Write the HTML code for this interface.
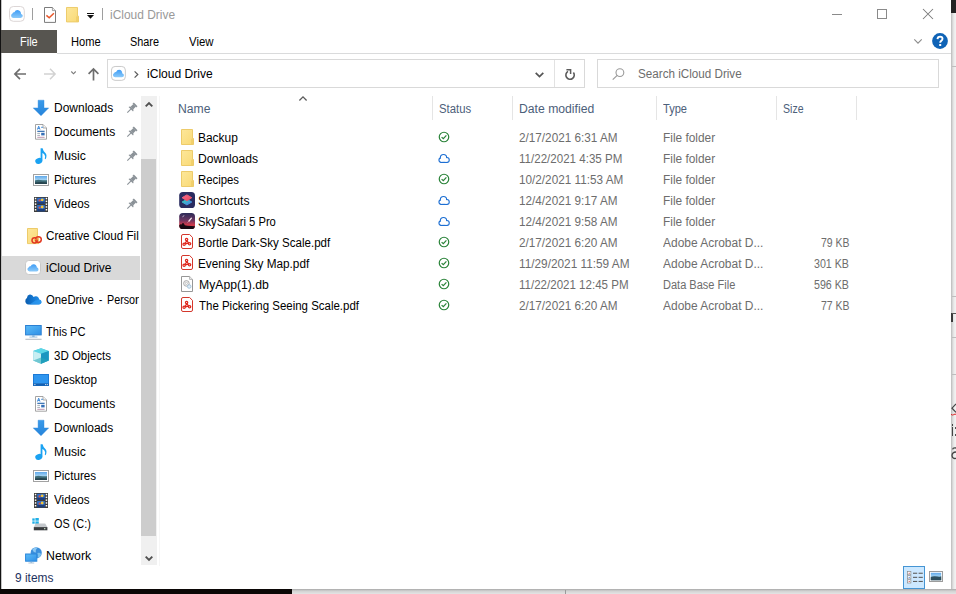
<!DOCTYPE html>
<html>
<head>
<meta charset="utf-8">
<title>iCloud Drive</title>
<style>
html,body{margin:0;padding:0;}
body{width:956px;height:594px;overflow:hidden;background:#fff;font-family:"Liberation Sans",sans-serif;font-size:12px;color:#000;position:relative;}
.a{position:absolute;}
.t{position:absolute;transform-origin:0 0;white-space:nowrap;line-height:16px;height:16px;font-size:12px;}
svg{position:absolute;overflow:visible;}
.sep{position:absolute;top:96px;width:1px;height:24px;background:#e5e5e5;}
</style>
</head>
<body>
<!-- window chrome / backgrounds -->
<div class="a" style="left:951px;top:0;width:5px;height:594px;background:linear-gradient(90deg,#b9b9b9 0,#d6d6d6 30%,#ebebeb 60%,#f3f3f3 100%);"></div>
<div class="a" style="left:951px;top:0;width:5px;height:13px;background:#222;"></div>
<div class="a" style="left:0;top:589px;width:956px;height:5px;background:linear-gradient(180deg,#a8a8a8 0,#d2d2d2 40%,#e4e4e4 100%);"></div>
<div class="a" style="left:0;top:589px;width:292px;height:5px;background:#0b0706;"></div>
<div class="a" style="left:0;top:0;width:1px;height:589px;background:#121212;"></div>
<div class="a" style="left:1px;top:0;width:1px;height:589px;background:#c4c4c4;"></div>

<!-- ribbon -->
<div class="a" style="left:1px;top:30px;width:56px;height:23px;background:#575550;"></div>
<div class="a" style="left:57px;top:53px;width:894px;height:1px;background:#dadbdc;"></div>

<!-- address + search -->
<div class="a" style="left:107px;top:59px;width:478px;height:29px;border:1px solid #d9d9d9;box-sizing:border-box;"></div>
<div class="a" style="left:554px;top:60px;width:1px;height:27px;background:#e2e2e2;"></div>
<div class="a" style="left:597px;top:59px;width:342px;height:29px;border:1px solid #d9d9d9;box-sizing:border-box;"></div>

<!-- sidebar selection + scrollbar -->
<div class="a" style="left:2px;top:256px;width:138px;height:24px;background:#d9d9d9;"></div>
<div class="a" style="left:141px;top:96px;width:16px;height:469px;background:#f0f0f0;"></div>
<div class="a" style="left:141px;top:159px;width:15px;height:377px;background:#cdcdcd;"></div>
<div class="a" style="left:159px;top:96px;width:1px;height:470px;background:#f6f6f6;"></div>

<!-- header separators -->
<div class="sep" style="left:432px;"></div>
<div class="sep" style="left:512px;"></div>
<div class="sep" style="left:656px;"></div>
<div class="sep" style="left:776px;"></div>
<div class="sep" style="left:856px;"></div>

<!-- fragments of window behind, right strip -->
<div class="a" style="left:952px;top:66px;width:4px;height:1px;background:#bdbdbd;"></div>
<div class="a" style="left:952px;top:296px;width:4px;height:1px;background:#bdbdbd;"></div>
<div class="a" style="left:952px;top:337px;width:4px;height:1px;background:#bdbdbd;"></div>
<div class="a" style="left:952px;top:374px;width:4px;height:1px;background:#bdbdbd;"></div>
<div class="a" style="left:951px;top:313px;width:2px;height:9px;background:#3a3a3a;"></div>
<div class="a" style="left:952px;top:313px;width:4px;height:1px;background:#555;"></div>
<svg style="left:951px;top:404px;" width="5" height="12" viewBox="0 0 5 12"><path d="M5 0L1 4.2L5 8.4" fill="none" stroke="#444" stroke-width="1.2"/><path d="M0 10.4Q1.5 11.6 2.8 10.6T5 10.4" fill="none" stroke="#d22" stroke-width="1"/></svg>
<div class="a" style="left:952px;top:424px;width:1px;height:2px;background:#444;"></div>
<div class="a" style="left:952px;top:427px;width:1px;height:9px;background:#444;"></div>
<div class="a" style="left:955px;top:427px;width:1px;height:2px;background:#555;"></div>
<div class="a" style="left:955px;top:434px;width:1px;height:2px;background:#555;"></div>
<svg style="left:951px;top:447px;" width="5" height="13" viewBox="0 0 5 13"><path d="M5 1Q2 0.4 1.6 2.4M5 5Q1 5 1 8.6Q1.4 12 5 11.4" fill="none" stroke="#444" stroke-width="1.3"/></svg>
<!-- bottom strip detail -->
<div class="a" style="left:565px;top:590px;width:1px;height:4px;background:#9a9a9a;"></div>
<!-- icons -->
<svg width="0" height="0" style="left:0;top:0;">
<defs>
<linearGradient id="gFold" x1="0" y1="0" x2="1" y2="1"><stop offset="0" stop-color="#fde79a"/><stop offset="1" stop-color="#f9d975"/></linearGradient>
<linearGradient id="gCloud" x1="0" y1="0" x2="0" y2="1"><stop offset="0" stop-color="#3d9cf6"/><stop offset="1" stop-color="#8ccaf9"/></linearGradient>
<linearGradient id="gOne" x1="0" y1="0" x2="1" y2="0"><stop offset="0" stop-color="#0b5cad"/><stop offset="0.5" stop-color="#1479d4"/><stop offset="1" stop-color="#2a94ea"/></linearGradient>
<linearGradient id="gArrow" x1="0" y1="0" x2="0" y2="1"><stop offset="0" stop-color="#3b9bea"/><stop offset="1" stop-color="#2583da"/></linearGradient>
<linearGradient id="gScreen" x1="0" y1="0" x2="1" y2="1"><stop offset="0" stop-color="#5cbcf8"/><stop offset="1" stop-color="#2f8fe6"/></linearGradient>
<linearGradient id="gSky" x1="0" y1="0" x2="0" y2="1"><stop offset="0" stop-color="#2b2b58"/><stop offset="0.45" stop-color="#6a3560"/><stop offset="0.75" stop-color="#d23c4c"/><stop offset="1" stop-color="#c03040"/></linearGradient>
<linearGradient id="gPink" x1="0" y1="0" x2="1" y2="1"><stop offset="0" stop-color="#f86a8c"/><stop offset="1" stop-color="#e8485a"/></linearGradient>
<linearGradient id="gTeal" x1="0" y1="0" x2="1" y2="1"><stop offset="0" stop-color="#36d6b8"/><stop offset="1" stop-color="#4a78ec"/></linearGradient>
<linearGradient id="gPic" x1="0" y1="0" x2="0" y2="1"><stop offset="0" stop-color="#5fa8ea"/><stop offset="0.45" stop-color="#9fd0f2"/><stop offset="0.6" stop-color="#4d7f8a"/><stop offset="1" stop-color="#2d5560"/></linearGradient>

<!-- folder 13x16 -->

<!-- pdf 12x15 -->

<!-- db file 12x16 -->

<!-- status: check 12x12 -->
<!-- status: cloud 12x9 -->
</defs>
</svg>

<!-- file list icons -->
<svg style="left:181px;top:129px;" width="13" height="16" viewBox="0 0 13 16" preserveAspectRatio="none"><path d="M0.5 0.5H11.5V9.5H12.5V15.5H0.5Z" fill="url(#gFold)" stroke="#edcb6a" stroke-width="1"/>
<path d="M11 9.8V15" stroke="#e9c45c" stroke-width="1" fill="none"/></svg>
<svg style="left:181px;top:150px;" width="13" height="16" viewBox="0 0 13 16" preserveAspectRatio="none"><path d="M0.5 0.5H11.5V9.5H12.5V15.5H0.5Z" fill="url(#gFold)" stroke="#edcb6a" stroke-width="1"/>
<path d="M11 9.8V15" stroke="#e9c45c" stroke-width="1" fill="none"/></svg>
<svg style="left:181px;top:171px;" width="13" height="16" viewBox="0 0 13 16" preserveAspectRatio="none"><path d="M0.5 0.5H11.5V9.5H12.5V15.5H0.5Z" fill="url(#gFold)" stroke="#edcb6a" stroke-width="1"/>
<path d="M11 9.8V15" stroke="#e9c45c" stroke-width="1" fill="none"/></svg>

<!-- Shortcuts -->
<svg style="left:179px;top:192px;" width="16" height="16" viewBox="0 0 16 16">
<rect x="0.2" y="0" width="15.8" height="16" rx="3.6" fill="#2a2c60"/>
<path d="M7.9 7.4L12.8 10L7.9 12.9L3.1 10Z" fill="url(#gTeal)" stroke="url(#gTeal)" stroke-width="1" stroke-linejoin="round"/>
<path d="M7.9 2.9L12.8 5.7L7.9 8.7L3.1 5.7Z" fill="url(#gPink)" stroke="url(#gPink)" stroke-width="1" stroke-linejoin="round"/>
</svg>

<!-- SkySafari -->
<svg style="left:179px;top:213px;" width="16" height="16" viewBox="0 0 16 16">
<defs><clipPath id="ssc"><rect x="0.2" y="0" width="15.8" height="16" rx="3.6"/></clipPath></defs>
<g clip-path="url(#ssc)">
<rect x="0" y="0" width="16" height="16" fill="url(#gSky)"/>
<path d="M0 12.6Q1.4 10.6 2.6 11.6Q3.4 9.2 4.6 10.2Q5.4 11 5.8 12.2L8.4 12.8L16 13.2V16H0Z" fill="#150a12"/>
<path d="M4.8 2.6L3.8 3.9" stroke="#d8cfe4" stroke-width="0.9" stroke-linecap="round" opacity="0.9"/>
<path d="M12.4 5.2L10 8" stroke="#f6e8ee" stroke-width="1.3" stroke-linecap="round"/>
<path d="M10 8L8.8 9.4" stroke="#e8a0b0" stroke-width="0.9" stroke-linecap="round" opacity="0.7"/>
</g>
</svg>

<svg style="left:181px;top:234px;" width="12" height="15" viewBox="0 0 12 15" preserveAspectRatio="none"><path d="M2 0.5H8.6L11.5 3.4V13Q11.5 14.5 10 14.5H2Q0.5 14.5 0.5 13V2Q0.5 0.5 2 0.5Z" fill="#fff" stroke="#d4372c" stroke-width="1"/>
<g fill="none" stroke="#e0281e" stroke-width="1.25">
<circle cx="5.6" cy="5.4" r="1.15"/>
<circle cx="3.1" cy="10.3" r="1.15"/>
<circle cx="8.6" cy="9.7" r="1.15"/>
<path d="M5.5 6.5Q5.2 8.6 3.7 9.5M5.9 6.5Q6.6 8.2 7.8 9M4.2 10Q6 9.2 7.5 9.5"/>
</g></svg>
<svg style="left:181px;top:255px;" width="12" height="15" viewBox="0 0 12 15" preserveAspectRatio="none"><path d="M2 0.5H8.6L11.5 3.4V13Q11.5 14.5 10 14.5H2Q0.5 14.5 0.5 13V2Q0.5 0.5 2 0.5Z" fill="#fff" stroke="#d4372c" stroke-width="1"/>
<g fill="none" stroke="#e0281e" stroke-width="1.25">
<circle cx="5.6" cy="5.4" r="1.15"/>
<circle cx="3.1" cy="10.3" r="1.15"/>
<circle cx="8.6" cy="9.7" r="1.15"/>
<path d="M5.5 6.5Q5.2 8.6 3.7 9.5M5.9 6.5Q6.6 8.2 7.8 9M4.2 10Q6 9.2 7.5 9.5"/>
</g></svg>
<svg style="left:181px;top:276px;" width="12" height="16" viewBox="0 0 12 16" preserveAspectRatio="none"><path d="M0.5 0.5H8.6L11.5 3.4V15.5H0.5Z" fill="#fff" stroke="#979797" stroke-width="1"/>
<path d="M8.6 0.5V3.4H11.5" fill="#f4f4f4" stroke="#a4a4a4" stroke-width="0.8"/>
<circle cx="5.4" cy="7.4" r="2.8" fill="#f6f6f6" stroke="#a2a2a2" stroke-width="0.9"/>
<circle cx="5.4" cy="7.4" r="1.1" fill="#fff" stroke="#b0b0b0" stroke-width="0.7"/>
<circle cx="8.2" cy="10.5" r="1.8" fill="#dcebf7" stroke="#9bbcd6" stroke-width="0.8"/></svg>
<svg style="left:181px;top:297px;" width="12" height="15" viewBox="0 0 12 15" preserveAspectRatio="none"><path d="M2 0.5H8.6L11.5 3.4V13Q11.5 14.5 10 14.5H2Q0.5 14.5 0.5 13V2Q0.5 0.5 2 0.5Z" fill="#fff" stroke="#d4372c" stroke-width="1"/>
<g fill="none" stroke="#e0281e" stroke-width="1.25">
<circle cx="5.6" cy="5.4" r="1.15"/>
<circle cx="3.1" cy="10.3" r="1.15"/>
<circle cx="8.6" cy="9.7" r="1.15"/>
<path d="M5.5 6.5Q5.2 8.6 3.7 9.5M5.9 6.5Q6.6 8.2 7.8 9M4.2 10Q6 9.2 7.5 9.5"/>
</g></svg>

<!-- status icons -->
<svg style="left:437.7px;top:131px;" width="12" height="12" viewBox="0 0 12 12" preserveAspectRatio="none"><circle cx="6" cy="6" r="4.75" fill="#fff" stroke="#2a8339" stroke-width="1.2"/>
<path d="M3.6 6.1L5.3 7.7L8.4 4.4" fill="none" stroke="#2a8339" stroke-width="1.2"/></svg>
<svg style="left:438px;top:154px;" width="12" height="9" viewBox="0 0 12 9" preserveAspectRatio="none"><g fill="#1d6fd3" stroke="#1d6fd3" stroke-width="2.2" stroke-linejoin="round"><circle cx="5.5" cy="3.7" r="2.6"/><circle cx="8.8" cy="5.9" r="1.9"/><circle cx="3.2" cy="6.1" r="1.7"/><rect x="3.2" y="5" width="5.6" height="2.8"/></g>
<g fill="#fff"><circle cx="5.5" cy="3.7" r="2.6"/><circle cx="8.8" cy="5.9" r="1.9"/><circle cx="3.2" cy="6.1" r="1.7"/><rect x="3.2" y="5" width="5.6" height="2.8"/></g></svg>
<svg style="left:437.7px;top:173px;" width="12" height="12" viewBox="0 0 12 12" preserveAspectRatio="none"><circle cx="6" cy="6" r="4.75" fill="#fff" stroke="#2a8339" stroke-width="1.2"/>
<path d="M3.6 6.1L5.3 7.7L8.4 4.4" fill="none" stroke="#2a8339" stroke-width="1.2"/></svg>
<svg style="left:438px;top:196px;" width="12" height="9" viewBox="0 0 12 9" preserveAspectRatio="none"><g fill="#1d6fd3" stroke="#1d6fd3" stroke-width="2.2" stroke-linejoin="round"><circle cx="5.5" cy="3.7" r="2.6"/><circle cx="8.8" cy="5.9" r="1.9"/><circle cx="3.2" cy="6.1" r="1.7"/><rect x="3.2" y="5" width="5.6" height="2.8"/></g>
<g fill="#fff"><circle cx="5.5" cy="3.7" r="2.6"/><circle cx="8.8" cy="5.9" r="1.9"/><circle cx="3.2" cy="6.1" r="1.7"/><rect x="3.2" y="5" width="5.6" height="2.8"/></g></svg>
<svg style="left:438px;top:217px;" width="12" height="9" viewBox="0 0 12 9" preserveAspectRatio="none"><g fill="#1d6fd3" stroke="#1d6fd3" stroke-width="2.2" stroke-linejoin="round"><circle cx="5.5" cy="3.7" r="2.6"/><circle cx="8.8" cy="5.9" r="1.9"/><circle cx="3.2" cy="6.1" r="1.7"/><rect x="3.2" y="5" width="5.6" height="2.8"/></g>
<g fill="#fff"><circle cx="5.5" cy="3.7" r="2.6"/><circle cx="8.8" cy="5.9" r="1.9"/><circle cx="3.2" cy="6.1" r="1.7"/><rect x="3.2" y="5" width="5.6" height="2.8"/></g></svg>
<svg style="left:437.7px;top:236px;" width="12" height="12" viewBox="0 0 12 12" preserveAspectRatio="none"><circle cx="6" cy="6" r="4.75" fill="#fff" stroke="#2a8339" stroke-width="1.2"/>
<path d="M3.6 6.1L5.3 7.7L8.4 4.4" fill="none" stroke="#2a8339" stroke-width="1.2"/></svg>
<svg style="left:437.7px;top:257px;" width="12" height="12" viewBox="0 0 12 12" preserveAspectRatio="none"><circle cx="6" cy="6" r="4.75" fill="#fff" stroke="#2a8339" stroke-width="1.2"/>
<path d="M3.6 6.1L5.3 7.7L8.4 4.4" fill="none" stroke="#2a8339" stroke-width="1.2"/></svg>
<svg style="left:437.7px;top:278px;" width="12" height="12" viewBox="0 0 12 12" preserveAspectRatio="none"><circle cx="6" cy="6" r="4.75" fill="#fff" stroke="#2a8339" stroke-width="1.2"/>
<path d="M3.6 6.1L5.3 7.7L8.4 4.4" fill="none" stroke="#2a8339" stroke-width="1.2"/></svg>
<svg style="left:437.7px;top:299px;" width="12" height="12" viewBox="0 0 12 12" preserveAspectRatio="none"><circle cx="6" cy="6" r="4.75" fill="#fff" stroke="#2a8339" stroke-width="1.2"/>
<path d="M3.6 6.1L5.3 7.7L8.4 4.4" fill="none" stroke="#2a8339" stroke-width="1.2"/></svg>

<!-- sidebar symbols -->
<svg width="0" height="0" style="left:0;top:0;">
<defs>
</defs>
</svg>

<svg style="left:33px;top:100px;" width="16" height="16" viewBox="0 0 16 16" preserveAspectRatio="none"><path d="M5.1 0.2H11V7.9H15.7L8 15.8L0.2 7.9H5.1Z" fill="url(#gArrow)" stroke="#2a86dc" stroke-width="0.4"/></svg>
<svg style="left:35px;top:124px;" width="12" height="16" viewBox="0 0 12 16" preserveAspectRatio="none"><path d="M0.5 0.5H8L11.5 4V15.2H0.5Z" fill="#fff" stroke="#9a9a9a" stroke-width="0.9"/>
<path d="M8 0.5V4H11.5" fill="#f4f4f4" stroke="#9a9a9a" stroke-width="0.8"/>
<path d="M2.4 5.6L3.7 2.2L5 5.6M2.9 4.4H4.5" stroke="#2b7fd6" stroke-width="0.9" fill="none"/>
<path d="M6 3.3H8" stroke="#4a93dc" stroke-width="0.9"/>
<path d="M2.3 7.3H9.6" stroke="#1f5fa8" stroke-width="1.1"/>
<path d="M2.3 9.4H5M2.3 11.4H5" stroke="#9aa4b0" stroke-width="0.9"/>
<rect x="6.2" y="8.8" width="3.4" height="2.6" fill="#3570b8"/>
<path d="M2.3 13.3H9.6" stroke="#b58aa8" stroke-width="0.9"/></svg>
<svg style="left:35px;top:148px;" width="12" height="16" viewBox="0 0 12 16" preserveAspectRatio="none"><ellipse cx="3.8" cy="12.9" rx="3.6" ry="2.9" fill="#1aa2f2" transform="rotate(-18 3.8 12.9)"/>
<path d="M5.6 0.3L7.6 0.3Q8 3 10.6 5.2Q12.4 7.2 10.6 11.2L9.8 10.8Q10.8 7.8 9.2 6.2Q8.2 5.2 7.4 5V12.6H5.6Z" fill="#1aa2f2"/></svg>
<svg style="left:33.2px;top:174.2px;" width="16" height="12" viewBox="0 0 16 12" preserveAspectRatio="none"><rect x="0.5" y="0.5" width="15" height="11" fill="#fff" stroke="#a2a2a2" stroke-width="1"/>
<rect x="2" y="2" width="12" height="8" fill="url(#gPic)"/>
<path d="M2 7.2Q5 5 8 6.2T14 6.4V10H2Z" fill="#3c6874" opacity="0.85"/>
<path d="M2 8.6Q7 7.4 14 8.4V10H2Z" fill="#27454f"/></svg>
<svg style="left:34.2px;top:196.8px;" width="14" height="15" viewBox="0 0 14 15" preserveAspectRatio="none"><rect x="0" y="0" width="14" height="15" fill="#3b3b3b"/>
<g fill="#fff"><rect x="0.8" y="0.8" width="1.5" height="1.5"/><rect x="0.8" y="3.6" width="1.5" height="1.5"/><rect x="0.8" y="6.4" width="1.5" height="1.5"/><rect x="0.8" y="9.2" width="1.5" height="1.5"/><rect x="0.8" y="12" width="1.5" height="1.5"/>
<rect x="11.7" y="0.8" width="1.5" height="1.5"/><rect x="11.7" y="3.6" width="1.5" height="1.5"/><rect x="11.7" y="6.4" width="1.5" height="1.5"/><rect x="11.7" y="9.2" width="1.5" height="1.5"/><rect x="11.7" y="12" width="1.5" height="1.5"/></g>
<rect x="3.2" y="0.8" width="7.6" height="6.2" fill="#2d6fce"/>
<rect x="3.2" y="8" width="7.6" height="6.2" fill="#2d6fce"/>
<rect x="3.2" y="4.6" width="7.6" height="2.4" fill="#1d3e7a"/>
<rect x="3.2" y="11.8" width="7.6" height="2.4" fill="#1d3e7a"/>
<circle cx="8.2" cy="2.8" r="1.4" fill="#f4c83a"/><circle cx="5.6" cy="3.4" r="1.1" fill="#d8503a"/>
<circle cx="8.2" cy="10" r="1.4" fill="#f4c83a"/><circle cx="5.6" cy="10.6" r="1.1" fill="#d8503a"/></svg>

<svg style="left:123.9px;top:100.5px;" width="15" height="15" viewBox="-2 -2 15 15" preserveAspectRatio="none"><g transform="rotate(45 5.5 5.5)" fill="#8a9197">
<rect x="2.9" y="-0.4" width="5.2" height="1.9"/>
<rect x="3.7" y="1.4" width="3.6" height="3.6"/>
<path d="M2.3 6.5Q2.5 4.8 4 4.8H7Q8.5 4.8 8.7 6.5Z"/>
<rect x="4.95" y="6.5" width="1.1" height="4.9"/>
</g></svg>
<svg style="left:123.9px;top:124.5px;" width="15" height="15" viewBox="-2 -2 15 15" preserveAspectRatio="none"><g transform="rotate(45 5.5 5.5)" fill="#8a9197">
<rect x="2.9" y="-0.4" width="5.2" height="1.9"/>
<rect x="3.7" y="1.4" width="3.6" height="3.6"/>
<path d="M2.3 6.5Q2.5 4.8 4 4.8H7Q8.5 4.8 8.7 6.5Z"/>
<rect x="4.95" y="6.5" width="1.1" height="4.9"/>
</g></svg>
<svg style="left:123.9px;top:148.5px;" width="15" height="15" viewBox="-2 -2 15 15" preserveAspectRatio="none"><g transform="rotate(45 5.5 5.5)" fill="#8a9197">
<rect x="2.9" y="-0.4" width="5.2" height="1.9"/>
<rect x="3.7" y="1.4" width="3.6" height="3.6"/>
<path d="M2.3 6.5Q2.5 4.8 4 4.8H7Q8.5 4.8 8.7 6.5Z"/>
<rect x="4.95" y="6.5" width="1.1" height="4.9"/>
</g></svg>
<svg style="left:123.9px;top:172.5px;" width="15" height="15" viewBox="-2 -2 15 15" preserveAspectRatio="none"><g transform="rotate(45 5.5 5.5)" fill="#8a9197">
<rect x="2.9" y="-0.4" width="5.2" height="1.9"/>
<rect x="3.7" y="1.4" width="3.6" height="3.6"/>
<path d="M2.3 6.5Q2.5 4.8 4 4.8H7Q8.5 4.8 8.7 6.5Z"/>
<rect x="4.95" y="6.5" width="1.1" height="4.9"/>
</g></svg>
<svg style="left:123.9px;top:196.5px;" width="15" height="15" viewBox="-2 -2 15 15" preserveAspectRatio="none"><g transform="rotate(45 5.5 5.5)" fill="#8a9197">
<rect x="2.9" y="-0.4" width="5.2" height="1.9"/>
<rect x="3.7" y="1.4" width="3.6" height="3.6"/>
<path d="M2.3 6.5Q2.5 4.8 4 4.8H7Q8.5 4.8 8.7 6.5Z"/>
<rect x="4.95" y="6.5" width="1.1" height="4.9"/>
</g></svg>

<!-- This PC children -->
<svg style="left:35px;top:396px;" width="12" height="16" viewBox="0 0 12 16" preserveAspectRatio="none"><path d="M0.5 0.5H8L11.5 4V15.2H0.5Z" fill="#fff" stroke="#9a9a9a" stroke-width="0.9"/>
<path d="M8 0.5V4H11.5" fill="#f4f4f4" stroke="#9a9a9a" stroke-width="0.8"/>
<path d="M2.4 5.6L3.7 2.2L5 5.6M2.9 4.4H4.5" stroke="#2b7fd6" stroke-width="0.9" fill="none"/>
<path d="M6 3.3H8" stroke="#4a93dc" stroke-width="0.9"/>
<path d="M2.3 7.3H9.6" stroke="#1f5fa8" stroke-width="1.1"/>
<path d="M2.3 9.4H5M2.3 11.4H5" stroke="#9aa4b0" stroke-width="0.9"/>
<rect x="6.2" y="8.8" width="3.4" height="2.6" fill="#3570b8"/>
<path d="M2.3 13.3H9.6" stroke="#b58aa8" stroke-width="0.9"/></svg>
<svg style="left:33px;top:420px;" width="16" height="16" viewBox="0 0 16 16" preserveAspectRatio="none"><path d="M5.1 0.2H11V7.9H15.7L8 15.8L0.2 7.9H5.1Z" fill="url(#gArrow)" stroke="#2a86dc" stroke-width="0.4"/></svg>
<svg style="left:35px;top:444px;" width="12" height="16" viewBox="0 0 12 16" preserveAspectRatio="none"><ellipse cx="3.8" cy="12.9" rx="3.6" ry="2.9" fill="#1aa2f2" transform="rotate(-18 3.8 12.9)"/>
<path d="M5.6 0.3L7.6 0.3Q8 3 10.6 5.2Q12.4 7.2 10.6 11.2L9.8 10.8Q10.8 7.8 9.2 6.2Q8.2 5.2 7.4 5V12.6H5.6Z" fill="#1aa2f2"/></svg>
<svg style="left:33.2px;top:470.2px;" width="16" height="12" viewBox="0 0 16 12" preserveAspectRatio="none"><rect x="0.5" y="0.5" width="15" height="11" fill="#fff" stroke="#a2a2a2" stroke-width="1"/>
<rect x="2" y="2" width="12" height="8" fill="url(#gPic)"/>
<path d="M2 7.2Q5 5 8 6.2T14 6.4V10H2Z" fill="#3c6874" opacity="0.85"/>
<path d="M2 8.6Q7 7.4 14 8.4V10H2Z" fill="#27454f"/></svg>
<svg style="left:34.2px;top:492.8px;" width="14" height="15" viewBox="0 0 14 15" preserveAspectRatio="none"><rect x="0" y="0" width="14" height="15" fill="#3b3b3b"/>
<g fill="#fff"><rect x="0.8" y="0.8" width="1.5" height="1.5"/><rect x="0.8" y="3.6" width="1.5" height="1.5"/><rect x="0.8" y="6.4" width="1.5" height="1.5"/><rect x="0.8" y="9.2" width="1.5" height="1.5"/><rect x="0.8" y="12" width="1.5" height="1.5"/>
<rect x="11.7" y="0.8" width="1.5" height="1.5"/><rect x="11.7" y="3.6" width="1.5" height="1.5"/><rect x="11.7" y="6.4" width="1.5" height="1.5"/><rect x="11.7" y="9.2" width="1.5" height="1.5"/><rect x="11.7" y="12" width="1.5" height="1.5"/></g>
<rect x="3.2" y="0.8" width="7.6" height="6.2" fill="#2d6fce"/>
<rect x="3.2" y="8" width="7.6" height="6.2" fill="#2d6fce"/>
<rect x="3.2" y="4.6" width="7.6" height="2.4" fill="#1d3e7a"/>
<rect x="3.2" y="11.8" width="7.6" height="2.4" fill="#1d3e7a"/>
<circle cx="8.2" cy="2.8" r="1.4" fill="#f4c83a"/><circle cx="5.6" cy="3.4" r="1.1" fill="#d8503a"/>
<circle cx="8.2" cy="10" r="1.4" fill="#f4c83a"/><circle cx="5.6" cy="10.6" r="1.1" fill="#d8503a"/></svg>

<!-- scrollbar arrows -->
<svg style="left:144.5px;top:101.3px;" width="8" height="7" viewBox="0 0 8 7"><path d="M0.7 5.4L4 2L7.3 5.4" fill="none" stroke="#505050" stroke-width="1.9"/></svg>
<svg style="left:144.5px;top:554.5px;" width="8" height="7" viewBox="0 0 8 7"><path d="M0.7 1.6L4 5L7.3 1.6" fill="none" stroke="#505050" stroke-width="1.9"/></svg>

<!-- Creative Cloud Files -->
<svg style="left:26.6px;top:227.8px;" width="16" height="17" viewBox="0 0 16 17">
<path d="M0.5 0.5H10.5V9H11.7V15.6H0.5Z" fill="url(#gFold)" stroke="#edcb6a" stroke-width="1"/>
<g fill="none" stroke="#e23a22" stroke-width="1.5">
<ellipse cx="7.6" cy="12.3" rx="2.6" ry="2.6"/>
<ellipse cx="11.4" cy="11.6" rx="2.9" ry="2.9"/>
</g>
<path d="M7.4 12.6Q9 10 11.6 11.4" fill="none" stroke="#f5b04a" stroke-width="0.7"/>
</svg>

<!-- iCloud Drive (sidebar) -->
<svg style="left:25px;top:260.4px;" width="16" height="15" viewBox="0 0 16 15">
<rect x="0.5" y="0.5" width="15" height="14" rx="3.2" fill="#fff" stroke="#c9c9c9" stroke-width="1"/>
<path d="M4.6 11.4H11.6Q13.5 11.2 13.5 9.4Q13.4 7.9 11.9 7.6Q11.6 4.4 8.6 4.2Q6.4 4.3 5.6 6.3Q4.2 6.2 3.6 7.6Q2.3 8 2.4 9.5Q2.6 11.2 4.6 11.4Z" fill="url(#gCloud)"/>
</svg>

<!-- OneDrive -->
<svg style="left:24.6px;top:294.2px;" width="17" height="11" viewBox="0 0 17 11">
<path d="M3.4 10.6H13.6Q16.4 10.4 16.5 8Q16.4 5.9 14.2 5.5Q13.8 2.6 11 2.3Q9.6 2.2 8.6 3.1Q7.4 0.3 4.8 0.6Q2.2 1.1 1.9 4Q0.2 4.8 0.3 7.3Q0.6 10.3 3.4 10.6Z" fill="url(#gOne)"/>
<path d="M3.4 10.6H13.6Q16.4 10.4 16.5 8Q16.4 6.4 15 5.8Q11 5.4 6.5 9.2Q5 10.3 3.4 10.6Z" fill="#2f9af0" opacity="0.75"/>
</svg>

<!-- This PC -->
<svg style="left:24.6px;top:325px;" width="17" height="15" viewBox="0 0 17 15">
<rect x="0.6" y="0.5" width="15.6" height="9.4" fill="url(#gScreen)" stroke="#2b7fd2" stroke-width="1"/>
<rect x="7.2" y="10.4" width="2.4" height="1.4" fill="#6fa8d8"/>
<rect x="4.4" y="11.6" width="8" height="0.9" fill="#8fb6d8"/>
<rect x="0.4" y="13.8" width="16.2" height="0.9" fill="#a8b0b8"/>
</svg>

<!-- 3D Objects -->
<svg style="left:32.8px;top:347.8px;" width="16" height="16" viewBox="0 0 16 16">
<path d="M8 0.2L15.8 3V12.4L8 15.8L0.2 12.4V3Z" fill="#3fc0d8"/>
<path d="M8 0.2L15.8 3L8 5.8L0.2 3Z" fill="#5cd6e6"/>
<path d="M0.2 3L8 5.8V15.8L0.2 12.4Z" fill="#c8eef2"/>
<path d="M8 5.8L15.8 3V12.4L8 15.8Z" fill="#1b96c0"/>
<path d="M0.2 12.4L8 9.6L15.8 12.4L8 15.8Z" fill="#28a8b8" opacity="0.55"/>
</svg>

<!-- Desktop -->
<svg style="left:32.8px;top:374px;" width="16" height="12" viewBox="0 0 16 12">
<rect x="0.5" y="0.5" width="15" height="11" fill="url(#gScreen)" stroke="#1c7ad6" stroke-width="1"/>
<rect x="1" y="1" width="14" height="8.2" fill="#2f96ef"/>
<rect x="0.2" y="9.4" width="15.6" height="2.4" fill="#155fb0"/>
<rect x="1.4" y="10.1" width="1" height="1" fill="#fff"/><rect x="12.2" y="10.1" width="0.9" height="1" fill="#fff"/><rect x="13.8" y="10.1" width="0.9" height="1" fill="#fff"/>
</svg>

<!-- OS (C:) -->
<svg style="left:32.4px;top:518.2px;" width="16" height="13" viewBox="0 0 16 13">
<g fill="#1eaee6"><rect x="0.3" y="0.4" width="2.4" height="2.3"/><rect x="3.4" y="0" width="3.4" height="2.7"/><rect x="0.3" y="3.4" width="2.4" height="2.3"/><rect x="3.4" y="3.4" width="3.4" height="2.8"/></g>
<path d="M3.6 5.6H13.2L15.4 9.2H1.8Z" fill="#c4c8cc"/>
<rect x="1.8" y="9.1" width="13.6" height="3.2" fill="#3a3d40"/>
<rect x="12" y="10.2" width="1.4" height="1" fill="#dff5d8"/>
</svg>

<!-- Network -->
<svg style="left:24.6px;top:547.4px;" width="17" height="17" viewBox="0 0 17 17">
<circle cx="11.2" cy="5.8" r="5.6" fill="#3b8fdc"/>
<path d="M7.2 2.4Q9.5 -0.2 12.6 0.6Q10.4 2.6 10.8 5.4Q8.6 5.6 7.2 2.4Z" fill="#8cc8f2"/>
<path d="M12.2 6.2Q14.6 5 16.2 7.2Q15.4 10 12.8 10.8Q13.4 8.4 12.2 6.2Z" fill="#7ac0ee"/>
<rect x="0.6" y="7" width="11.2" height="7.2" fill="url(#gScreen)" stroke="#2b86da" stroke-width="1"/>
<rect x="5.4" y="14.6" width="1.8" height="1" fill="#6fa8d8"/>
<rect x="3.4" y="15.6" width="5.8" height="0.8" fill="#9ab4cc"/>
</svg>

<!-- title bar icons -->
<svg style="left:9px;top:6px;" width="16" height="16" viewBox="0 0 16 16">
<rect x="0.5" y="0.5" width="14.8" height="14.8" rx="3.8" fill="#fff" stroke="#dcd6d6" stroke-width="1"/>
<path d="M4.4 12H11.6Q13.8 11.8 13.8 9.8Q13.7 8.2 12.1 7.9Q11.8 4.4 8.6 4Q6.3 4.1 5.4 6.3Q3.9 6.2 3.3 7.7Q2 8.2 2.1 9.9Q2.4 11.8 4.4 12Z" fill="url(#gCloud)"/>
</svg>
<div class="a" style="left:32px;top:8px;width:1px;height:12px;background:#9e9e9e;"></div>
<svg style="left:44px;top:7px;" width="12" height="16" viewBox="0 0 12 16">
<path d="M0.5 0.5H8.4L11.5 3.6V15.4H0.5Z" fill="#fff" stroke="#7c7c7c" stroke-width="1"/>
<path d="M8.4 0.5V3.6H11.5" fill="#f0f0f0" stroke="#8a8a8a" stroke-width="0.8"/>
<path d="M2.4 8.4L5.2 10.8L9.9 6.2" fill="none" stroke="#e8562a" stroke-width="1.5"/>
</svg>
<svg style="left:66px;top:7.2px;" width="13" height="15.4" viewBox="0 0 13 16" preserveAspectRatio="none"><path d="M0.5 0.5H11.5V9.5H12.5V15.5H0.5Z" fill="url(#gFold)" stroke="#edcb6a" stroke-width="1"/>
<path d="M11 9.8V15" stroke="#e9c45c" stroke-width="1" fill="none"/></svg>
<div class="a" style="left:87px;top:13px;width:7px;height:1px;background:#111;"></div>
<svg style="left:87px;top:15px;" width="7" height="4" viewBox="0 0 7 4"><path d="M0 0H7L3.5 3.8Z" fill="#111"/></svg>
<div class="a" style="left:102px;top:8px;width:1px;height:12px;background:#9e9e9e;"></div>

<!-- window controls -->
<div class="a" style="left:832px;top:14px;width:10px;height:1px;background:#8a8a8a;"></div>
<div class="a" style="left:877px;top:9px;width:10px;height:10px;border:1px solid #8a8a8a;box-sizing:border-box;"></div>
<svg style="left:923px;top:9px;" width="10" height="10" viewBox="0 0 10 10"><path d="M0 0L10 10M10 0L0 10" stroke="#7a7a7a" stroke-width="1.05" fill="none"/></svg>

<!-- ribbon chevron + help -->
<svg style="left:914px;top:38.6px;" width="8" height="5" viewBox="0 0 8 5"><path d="M0.3 0.4L4 4.2L7.7 0.4" fill="none" stroke="#8c8c8c" stroke-width="1.1"/></svg>
<svg style="left:932px;top:32.8px;" width="16" height="16" viewBox="0 0 16 16">
<circle cx="8" cy="8" r="7.9" fill="#0f63b6"/>
<path d="M5.5 6.1Q5.6 3.6 8.1 3.6Q10.5 3.7 10.5 5.8Q10.5 7 9.2 7.9Q8.2 8.6 8.2 9.8" fill="none" stroke="#fff" stroke-width="1.9"/>
<rect x="7.2" y="11" width="2" height="2" fill="#fff"/>
</svg>

<!-- nav arrows -->
<svg style="left:13.5px;top:68px;" width="13" height="12" viewBox="0 0 13 12"><path d="M6 0.8L0.9 6L6 11.2M1 6H12" fill="none" stroke="#6e6e6e" stroke-width="1.7"/></svg>
<svg style="left:43.2px;top:68px;" width="13" height="12" viewBox="0 0 13 12"><path d="M7 0.8L12.1 6L7 11.2M12 6H1" fill="none" stroke="#d2d2d2" stroke-width="1.5"/></svg>
<svg style="left:70.5px;top:71.4px;" width="5" height="4" viewBox="0 0 5 4"><path d="M0.3 0.5L2.5 2.8L4.7 0.5" fill="none" stroke="#7a7a7a" stroke-width="1.1"/></svg>
<svg style="left:88.4px;top:68.2px;" width="11" height="13" viewBox="0 0 11 13"><path d="M0.6 5.8L5.5 0.9L10.4 5.8M5.5 1V12.4" fill="none" stroke="#6e6e6e" stroke-width="1.7"/></svg>

<!-- address bar icon -->
<svg style="left:110.5px;top:65.5px;" width="15" height="15" viewBox="0 0 16 16">
<rect x="0.5" y="0.5" width="14.8" height="14.8" rx="3.8" fill="#fff" stroke="#c6c6c6" stroke-width="1"/>
<path d="M4.4 12H11.6Q13.8 11.8 13.8 9.8Q13.7 8.2 12.1 7.9Q11.8 4.4 8.6 4Q6.3 4.1 5.4 6.3Q3.9 6.2 3.3 7.7Q2 8.2 2.1 9.9Q2.4 11.8 4.4 12Z" fill="url(#gCloud)"/>
</svg>
<svg style="left:133.6px;top:70.6px;" width="5" height="7" viewBox="0 0 5 7"><path d="M0.6 0.4L3.8 3.5L0.6 6.6" fill="none" stroke="#5a5a5a" stroke-width="1.2"/></svg>

<!-- dropdown chevron, refresh, search -->
<svg style="left:535.4px;top:72.4px;" width="9" height="6" viewBox="0 0 9 6"><path d="M0.7 0.8L4.5 4.6L8.3 0.8" fill="none" stroke="#555" stroke-width="1.7"/></svg>
<svg style="left:565px;top:69px;" width="10" height="11" viewBox="0 0 10 11">
<path d="M8.4 3.5A4.2 4.2 0 1 1 3 2.4" fill="none" stroke="#5c5c5c" stroke-width="1.6"/>
<path d="M1.4 0.7H5.6V4.9" fill="none" stroke="#5c5c5c" stroke-width="1.5"/>
</svg>
<svg style="left:612px;top:68px;" width="13" height="12" viewBox="0 0 13 12">
<circle cx="7.9" cy="4.6" r="3.9" fill="none" stroke="#9a9a9a" stroke-width="1.1"/>
<path d="M5.2 7.4L0.7 11.6" stroke="#9a9a9a" stroke-width="1.2"/>
</svg>

<!-- sort chevron -->
<svg style="left:298.5px;top:96px;" width="8" height="5" viewBox="0 0 8 5"><path d="M0.4 4.5L4 0.8L7.6 4.5" fill="none" stroke="#5a5a5a" stroke-width="1.25"/></svg>

<!-- view mode buttons -->
<div class="a" style="left:903px;top:566px;width:22px;height:23px;background:#cce8ff;border:1px solid #4595d4;box-sizing:border-box;"></div>
<svg style="left:907px;top:571px;" width="16" height="13" viewBox="0 0 16 13">
<g fill="#fff" stroke="#8a8a8a" stroke-width="0.7"><rect x="0.5" y="0.6" width="3.4" height="3.2"/><rect x="0.5" y="4.7" width="3.4" height="3.2"/><rect x="0.5" y="8.8" width="3.4" height="3.2"/></g>
<g fill="#c44"><rect x="1.7" y="1.8" width="1" height="1"/><rect x="1.7" y="5.9" width="1" height="1" fill="#36c"/><rect x="1.7" y="10" width="1" height="1"/></g>
<g fill="#5f5f5f"><rect x="6" y="1.7" width="4.2" height="1.1"/><rect x="11.6" y="1.7" width="4.2" height="1.1"/><rect x="6" y="5.8" width="4.2" height="1.1"/><rect x="11.6" y="5.8" width="4.2" height="1.1"/><rect x="6" y="9.9" width="4.2" height="1.1"/><rect x="11.6" y="9.9" width="4.2" height="1.1"/></g>
</svg>
<svg style="left:929px;top:571px;" width="14" height="11" viewBox="0 0 14 11">
<rect x="0.5" y="0.5" width="13" height="10" fill="#fff" stroke="#9c9c9c" stroke-width="1"/>
<rect x="1.8" y="1.8" width="10.4" height="7.4" fill="url(#gPic)"/>
<path d="M1.8 6.2Q5 4.6 8 5.6T12.2 5.2V9.2H1.8Z" fill="#2c4c5c" opacity="0.9"/>
</svg>

<!-- text -->
<div class="t" style="left:110.18px;top:6.5px;color:#999;transform:scaleX(0.9952);">iCloud Drive</div>
<div class="t" style="left:20.34px;top:34.0px;color:#fff;transform:scaleX(0.9164);">File</div>
<div class="t" style="left:71.07px;top:34.0px;color:#000;transform:scaleX(0.9271);">Home</div>
<div class="t" style="left:130.08px;top:34.0px;color:#000;transform:scaleX(0.9063);">Share</div>
<div class="t" style="left:188.55px;top:34.0px;color:#000;transform:scaleX(0.9498);">View</div>
<div class="t" style="left:147.08px;top:66.0px;color:#000;transform:scaleX(1.0049);">iCloud Drive</div>
<div class="t" style="left:637.96px;top:66.0px;color:#6d6d6d;transform:scaleX(0.9716);">Search iCloud Drive</div>
<div class="t" style="left:53.75px;top:100.0px;color:#000;transform:scaleX(0.9985);">Downloads</div>
<div class="t" style="left:53.75px;top:124.0px;color:#000;transform:scaleX(1.0089);">Documents</div>
<div class="t" style="left:53.75px;top:148.0px;color:#000;transform:scaleX(1.0131);">Music</div>
<div class="t" style="left:53.75px;top:172.0px;color:#000;transform:scaleX(0.9707);">Pictures</div>
<div class="t" style="left:53.91px;top:196.0px;color:#000;transform:scaleX(0.9722);">Videos</div>
<div class="t" style="left:45.84px;top:228.0px;color:#000;transform:scaleX(0.9730);">Creative Cloud Fil</div>
<div class="t" style="left:45.80px;top:260.0px;color:#000;transform:scaleX(1.0024);">iCloud Drive</div>
<div class="t" style="left:46.25px;top:292.0px;color:#000;transform:scaleX(0.9430);">OneDrive</div>
<div class="t" style="left:99.15px;top:292.0px;color:#000;transform:scaleX(0.8250);">-</div>
<div class="t" style="left:106.65px;top:292.0px;color:#000;transform:scaleX(0.8966);">Perso</div>
<div class="t" style="left:135.45px;top:292.0px;color:#000;transform:scaleX(1.0167);width:4.3px;overflow:hidden;">n</div>
<div class="t" style="left:45.98px;top:324.0px;color:#000;transform:scaleX(0.9273);">This PC</div>
<div class="t" style="left:53.71px;top:348.0px;color:#000;transform:scaleX(0.9586);">3D Objects</div>
<div class="t" style="left:53.75px;top:372.0px;color:#000;transform:scaleX(0.9746);">Desktop</div>
<div class="t" style="left:53.75px;top:396.0px;color:#000;transform:scaleX(1.0089);">Documents</div>
<div class="t" style="left:53.75px;top:420.0px;color:#000;transform:scaleX(0.9985);">Downloads</div>
<div class="t" style="left:53.75px;top:444.0px;color:#000;transform:scaleX(1.0131);">Music</div>
<div class="t" style="left:53.75px;top:468.0px;color:#000;transform:scaleX(0.9707);">Pictures</div>
<div class="t" style="left:53.91px;top:492.0px;color:#000;transform:scaleX(0.9722);">Videos</div>
<div class="t" style="left:53.78px;top:516.0px;color:#000;transform:scaleX(0.9066);">OS (C:)</div>
<div class="t" style="left:45.59px;top:548.0px;color:#000;transform:scaleX(1.0275);">Network</div>
<div class="t" style="left:14.57px;top:570.0px;color:#1e3260;transform:scaleX(0.9955);">9 items</div>
<div class="t" style="left:178.23px;top:101.0px;color:#4c607a;transform:scaleX(1.0124);">Name</div>
<div class="t" style="left:438.95px;top:101.0px;color:#4c607a;transform:scaleX(0.9430);">Status</div>
<div class="t" style="left:519.23px;top:101.0px;color:#4c607a;transform:scaleX(1.0156);">Date modified</div>
<div class="t" style="left:663.38px;top:101.0px;color:#4c607a;transform:scaleX(0.9218);">Type</div>
<div class="t" style="left:783.11px;top:101.0px;color:#4c607a;transform:scaleX(0.8793);">Size</div>
<div class="t" style="left:198.19px;top:130.0px;color:#000;transform:scaleX(0.9954);">Backup</div>
<div class="t" style="left:518.88px;top:130.0px;color:#6d6d6d;transform:scaleX(0.9786);">2/17/2021 6:31 AM</div>
<div class="t" style="left:663.23px;top:130.0px;color:#6d6d6d;transform:scaleX(0.9886);">File folder</div>
<div class="t" style="left:198.19px;top:151.0px;color:#000;transform:scaleX(1.0101);">Downloads</div>
<div class="t" style="left:519.14px;top:151.0px;color:#6d6d6d;transform:scaleX(0.9637);">11/22/2021 4:35 PM</div>
<div class="t" style="left:663.23px;top:151.0px;color:#6d6d6d;transform:scaleX(0.9886);">File folder</div>
<div class="t" style="left:198.19px;top:172.0px;color:#000;transform:scaleX(0.9461);">Recipes</div>
<div class="t" style="left:518.95px;top:172.0px;color:#6d6d6d;transform:scaleX(0.9786);">10/2/2021 11:53 AM</div>
<div class="t" style="left:663.23px;top:172.0px;color:#6d6d6d;transform:scaleX(0.9886);">File folder</div>
<div class="t" style="left:198.26px;top:193.0px;color:#000;transform:scaleX(1.0164);">Shortcuts</div>
<div class="t" style="left:519.13px;top:193.0px;color:#6d6d6d;transform:scaleX(0.9780);">12/4/2021 9:17 AM</div>
<div class="t" style="left:663.23px;top:193.0px;color:#6d6d6d;transform:scaleX(0.9886);">File folder</div>
<div class="t" style="left:198.18px;top:214.0px;color:#000;transform:scaleX(0.9337);">SkySafari 5 Pro</div>
<div class="t" style="left:519.13px;top:214.0px;color:#6d6d6d;transform:scaleX(0.9780);">12/4/2021 9:58 AM</div>
<div class="t" style="left:663.23px;top:214.0px;color:#6d6d6d;transform:scaleX(0.9886);">File folder</div>
<div class="t" style="left:198.19px;top:235.0px;color:#000;transform:scaleX(0.9624);">Bortle Dark-Sky Scale.pdf</div>
<div class="t" style="left:518.88px;top:235.0px;color:#6d6d6d;transform:scaleX(0.9786);">2/17/2021 6:20 AM</div>
<div class="t" style="left:663.26px;top:235.0px;color:#6d6d6d;transform:scaleX(0.9968);">Adobe Acrobat D...</div>
<div class="t" style="left:820.78px;top:235.0px;color:#6d6d6d;transform:scaleX(0.8697);">79 KB</div>
<div class="t" style="left:198.37px;top:256.0px;color:#000;transform:scaleX(0.9806);">Evening Sky Map.pdf</div>
<div class="t" style="left:518.95px;top:256.0px;color:#6d6d6d;transform:scaleX(0.9840);">11/29/2021 11:59 AM</div>
<div class="t" style="left:663.26px;top:256.0px;color:#6d6d6d;transform:scaleX(0.9968);">Adobe Acrobat D...</div>
<div class="t" style="left:813.78px;top:256.0px;color:#6d6d6d;transform:scaleX(0.8884);">301 KB</div>
<div class="t" style="left:198.75px;top:277.0px;color:#000;transform:scaleX(1.0170);">MyApp(1).db</div>
<div class="t" style="left:519.14px;top:277.0px;color:#6d6d6d;transform:scaleX(0.9618);">11/22/2021 12:45 PM</div>
<div class="t" style="left:663.11px;top:277.0px;color:#6d6d6d;transform:scaleX(0.9185);">Data Base File</div>
<div class="t" style="left:813.83px;top:277.0px;color:#6d6d6d;transform:scaleX(0.8871);">596 KB</div>
<div class="t" style="left:198.74px;top:298.0px;color:#000;transform:scaleX(0.9553);">The Pickering Seeing Scale.pdf</div>
<div class="t" style="left:518.88px;top:298.0px;color:#6d6d6d;transform:scaleX(0.9786);">2/17/2021 6:20 AM</div>
<div class="t" style="left:663.26px;top:298.0px;color:#6d6d6d;transform:scaleX(0.9968);">Adobe Acrobat D...</div>
<div class="t" style="left:820.78px;top:298.0px;color:#6d6d6d;transform:scaleX(0.8697);">77 KB</div>
</body>
</html>
